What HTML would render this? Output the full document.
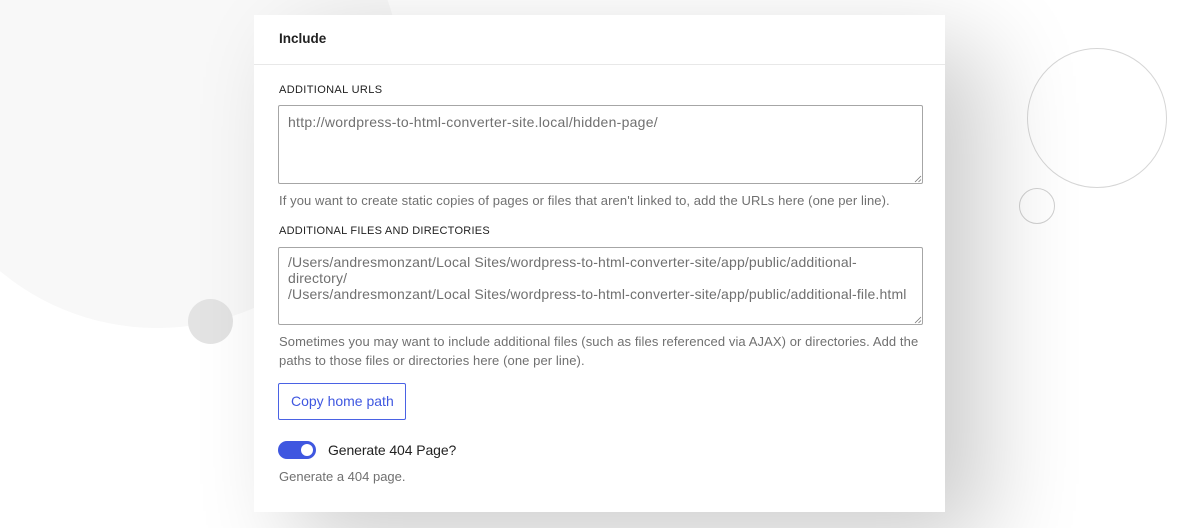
<!DOCTYPE html>
<html>
<head>
<meta charset="utf-8">
<style>
html,body{margin:0;padding:0;width:1200px;height:528px;overflow:hidden;background:#fff}
body{position:relative;font-family:"Liberation Sans",sans-serif}
.abs{position:absolute}
.blob{left:-88px;top:-162px;width:490px;height:490px;border-radius:50%;background:#f8f8f8}
.dot{left:188px;top:299px;width:45px;height:45px;border-radius:50%;background:#e3e3e3}
.c1{left:1027px;top:48px;width:138px;height:138px;border:1px solid #d6d6d6;border-radius:50%}
.c2{left:1019px;top:188px;width:34px;height:34px;border:1px solid #d0d0d0;border-radius:50%}
.card{left:254px;top:15px;width:691px;height:497px;background:#fff;box-shadow:40px 30px 90px rgba(0,0,0,.2)}
.t{position:absolute;white-space:nowrap;line-height:18px;filter:blur(.3px)}
.hr{left:254px;top:64px;width:691px;height:1px;background:#e8e8e8}
.ta{position:absolute;left:278px;width:643px;background:#fff;border:1px solid #a6a6a6;border-radius:2px}
.g{color:#707070;font-size:13px;letter-spacing:.09px}
.v{color:#707070;font-size:14px;line-height:14px}
.l{color:#222;font-size:11px}
.btn{left:278px;top:383px;width:126px;height:35px;border:1px solid #4a62e4;border-radius:2px;background:#fff}
.tog{left:278px;top:441px;width:38px;height:18px;border-radius:9px;background:#3f57e0}
.knob{left:301px;top:444px;width:12px;height:12px;border-radius:50%;background:#fff}
svg{position:absolute}
</style>
</head>
<body>
<div class="abs blob"></div>
<div class="abs dot"></div>
<div class="abs c1"></div>
<div class="abs c2"></div>
<div class="abs card"></div>
<div class="abs hr"></div>

<div class="t" style="left:279px;top:30px;font-size:13.500px;font-weight:bold;color:#222">Include</div>

<div class="t l" style="left:279px;top:81px;letter-spacing:.36px">ADDITIONAL URLS</div>
<div class="ta" style="top:105px;height:77px"></div>
<svg style="left:914px;top:175px" width="8" height="8"><path d="M1 7L7 1M4.500 7L7 4.500" stroke="#777" stroke-width=".8" fill="none"/></svg>
<div class="t v" style="left:288px;top:115px;letter-spacing:.26px">http://wordpress-to-html-converter-site.local/hidden-page/</div>
<div class="t g" style="left:279px;top:192px">If you want to create static copies of pages or files that aren't linked to, add the URLs here (one per line).</div>

<div class="t l" style="left:279px;top:222px;letter-spacing:.25px">ADDITIONAL FILES AND DIRECTORIES</div>
<div class="ta" style="top:247px;height:76px"></div>
<svg style="left:914px;top:316px" width="8" height="8"><path d="M1 7L7 1M4.500 7L7 4.500" stroke="#777" stroke-width=".8" fill="none"/></svg>
<div class="t v" style="left:288px;top:255px;letter-spacing:.16px">/Users/andresmonzant/Local Sites/wordpress-to-html-converter-site/app/public/additional-</div>
<div class="t v" style="left:288px;top:271px;letter-spacing:.16px">directory/</div>
<div class="t v" style="left:288px;top:287px;letter-spacing:.16px">/Users/andresmonzant/Local Sites/wordpress-to-html-converter-site/app/public/additional-file.html</div>

<div class="t g" style="left:279px;top:333px">Sometimes you may want to include additional files (such as files referenced via AJAX) or directories. Add the</div>
<div class="t g" style="left:279px;top:352px">paths to those files or directories here (one per line).</div>

<div class="abs btn"></div>
<div class="t" style="left:291px;top:392px;font-size:14px;color:#3f57e0">Copy home path</div>

<div class="abs tog"></div>
<div class="abs knob"></div>
<div class="t" style="left:328px;top:441px;font-size:14px;letter-spacing:-.1px;color:#222">Generate 404 Page?</div>
<div class="t g" style="left:279px;top:468px;letter-spacing:0">Generate a 404 page.</div>
</body>
</html>
